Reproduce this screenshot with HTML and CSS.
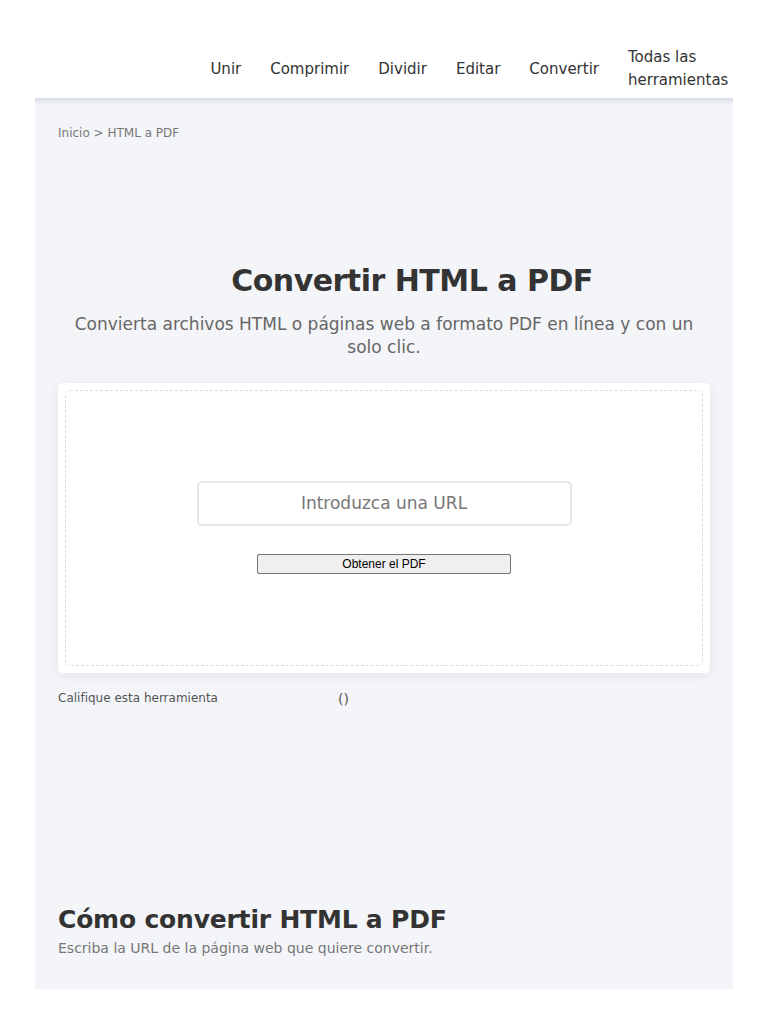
FILE: index.html
```html
<!DOCTYPE html>
<html lang="es">
<head>
    <meta charset="UTF-8">
    <title>Convertir HTML a PDF</title>
    <link rel="stylesheet" href="styles.css">
</head>
<body>

<!-- Cabecera con menú -->
<header class="cabecera">
    <nav class="menu">
        <a href="#">Unir</a>
        <a href="#">Comprimir</a>
        <a href="#">Dividir</a>
        <a href="#">Editar</a>
        <a href="#">Convertir</a>
        <a href="#" class="menu-todas">Todas las herramientas</a>
    </nav>
</header>

<main class="contenido">

    <div class="migas">Inicio &gt; HTML a PDF</div>

    <!-- Título de la herramienta -->
    <section class="herramienta-titulo">
        <h1><span class="icono-hueco"></span>Convertir HTML a PDF</h1>
        <p>Convierta archivos HTML o páginas web a formato PDF en línea y con un solo clic.</p>
    </section>

    <!-- Zona de conversión -->
    <div class="tarjeta">
        <div class="zona-url">
            <input type="text" class="campo-url" placeholder="Introduzca una URL">
            <button class="btn-obtener">Obtener el PDF</button>
        </div>
    </div>

    <div class="valoracion">
        <span>Califique esta herramienta</span>
        <span class="valoracion-num">()</span>
    </div>

    <!-- Instrucciones -->
    <section class="como">
        <h2>Cómo convertir HTML a PDF</h2>
        <p>Escriba la URL de la página web que quiere convertir.</p>
    </section>

</main>

</body>
</html>
```

FILE: styles.css
```css
body { margin: 0; font-family: "DejaVu Sans", "Noto Sans", sans-serif; color: #333; background: #fff; }
a { color: inherit; text-decoration: none; }

/* Cabecera */
.cabecera { height: 58px; padding-top: 40px; display: flex; justify-content: flex-end; padding-right: 34px; }
.menu { display: flex; align-items: center; gap: 29px; font-size: 15px; }
.menu-todas { max-width: 106px; line-height: 23px; }

/* Bloque gris principal */
.contenido { margin: 0 35px; background: #f4f5f9; padding: 28px 23px 33px; box-shadow: inset 0 7px 6px -5px rgba(160, 168, 190, 0.45); }
.migas { font-size: 12px; color: #777; }

.herramienta-titulo { text-align: center; margin-top: 119px; }
.herramienta-titulo h1 { margin: 0; font-size: 30px; letter-spacing: -0.5px; font-weight: 700; line-height: 44px; }
.icono-hueco { display: inline-block; width: 56px; }
.herramienta-titulo p { margin: 10px 0 0; font-size: 17px; line-height: 23px; color: #666; }

.tarjeta { margin-top: 24px; background: #fff; border-radius: 5px; padding: 7px; box-shadow: 0 2px 10px rgba(180, 186, 205, 0.3); }
.zona-url { border: 1px dashed #dcdcdc; border-radius: 5px; height: 274px; display: flex; flex-direction: column; align-items: center; justify-content: center; gap: 28px; }
.campo-url { width: 375px; height: 45px; box-sizing: border-box; border: 2px solid #e6e7eb; border-radius: 5px; text-align: center; font-family: inherit; font-size: 17px; color: #333; outline: none; margin-top: -2px; }
.campo-url::placeholder { color: #777; }
.btn-obtener { width: 254px; height: 20px; padding: 0; font-family: "Liberation Sans", Arial, sans-serif; font-size: 12px; color: #000; background: #efefef; border: 1px solid #767676; border-radius: 2px; }

.valoracion { margin-top: 18px; font-size: 12px; color: #555; display: flex; }
.valoracion-num { margin-left: 120px; font-size: 14px; }

.como { margin-top: 196px; }
.como h2 { margin: 0; font-size: 25px; letter-spacing: -0.2px; line-height: 34px; font-weight: 700; }
.como p { margin: 3px 0 0; font-size: 14px; color: #777; }
```
